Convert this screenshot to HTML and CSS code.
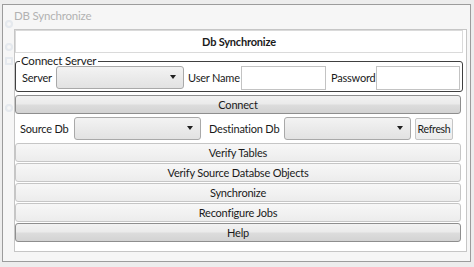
FILE: index.html
```html
<!DOCTYPE html>
<html>
<head>
<meta charset="utf-8">
<link rel="stylesheet" href="styles.css">
</head>
<body>
<div class="frame">
  <span class="ghost g1"></span>
  <span class="ghost g2"></span>
  <span class="ghost g3"></span>
  <span class="ghost g4"></span>
  <div class="title">DB Synchronize</div>
  <div class="panel">
    <div class="header">Db Synchronize</div>
    <div class="group">
      <span class="legend">Connect Server</span>
      <div class="row">
        <span class="lbl l-server">Server</span>
        <div class="combo c-server"><span class="arrow"></span></div>
        <span class="lbl l-user">User Name</span>
        <div class="textbox t-user"></div>
        <span class="lbl l-pass">Password</span>
        <div class="textbox t-pass"></div>
      </div>
    </div>
    <div class="btn strong b-connect">Connect</div>
    <div class="row dbrow">
      <span class="lbl l-src">Source Db</span>
      <div class="combo c-db"><span class="arrow"></span></div>
      <span class="lbl l-dst">Destination Db</span>
      <div class="combo c-db"><span class="arrow"></span></div>
      <div class="refresh">Refresh</div>
    </div>
    <div class="btn b-first">Verify Tables</div>
    <div class="btn">Verify Source Databse Objects</div>
    <div class="btn">Synchronize</div>
    <div class="btn">Reconfigure Jobs</div>
    <div class="btn strong">Help</div>
  </div>
</div>
</body>
</html>
```
FILE: styles.css
```css
* { box-sizing: border-box; }
html, body { margin: 0; padding: 0; }
body {
  background: #ededed;
  font-family: Lato, "Noto Sans", sans-serif;
  font-size: 11px;
  letter-spacing: -0.2px;
  color: #1a1a1a;
  width: 474px;
  height: 267px;
  overflow: hidden;
  padding-top: 4px;
  padding-left: 2px;
}
.frame {
  position: relative;
  width: 469px;
  height: 258px;
  border: 1px solid #9c9c9c;
  background: #f6f6f6;
}
.ghost {
  position: absolute;
  left: 2px;
  width: 8px;
  height: 8px;
  border: 2px solid #d4dbe6;
  border-radius: 50%;
  opacity: 0.5;
}
.g1 { top: 15px; }
.g2 { top: 38px; }
.g3 { top: 52px; border-radius: 1px; }
.g4 { top: 99px; }
.title {
  height: 24px;
  padding-left: 11px;
  line-height: 22px;
  color: #b2b2b2;
  font-size: 11.5px;
}
.panel {
  margin-left: 11px;
  width: 453px;
  height: 223px;
  border: 1px solid #c6c6c6;
  background: #fff;
  display: flex;
  flex-direction: column;
  align-items: flex-start;
}
.header {
  width: 448px;
  height: 23px;
  border: 1px solid #dadada;
  display: flex;
  align-items: center;
  justify-content: center;
  font-weight: bold;
}
.group {
  position: relative;
  margin-top: 8px;
  width: 448px;
  height: 31px;
  border: 1px solid #404040;
  border-radius: 3px;
  padding: 4px 2px 2px 6px;
}
.legend {
  position: absolute;
  top: -9px;
  left: 4px;
  padding: 0 2px 0 1px;
  background: #fff;
  font-size: 11.5px;
  line-height: 16px;
}
.row {
  display: flex;
  align-items: center;
  height: 23px;
}
.row > * { flex: none; }
.lbl { white-space: nowrap; }
.l-server { width: 34px; }
.l-user { width: 57px; padding-left: 4px; }
.l-pass { width: 50px; padding-left: 5px; }
.combo {
  position: relative;
  height: 23px;
  border: 1px solid #a9a9a9;
  border-radius: 3px;
  background: linear-gradient(#f3f3f3, #e2e2e2);
}
.c-server { width: 128px; }
.arrow {
  position: absolute;
  right: 7px;
  top: 8px;
  width: 0;
  height: 0;
  border-left: 3.5px solid transparent;
  border-right: 3.5px solid transparent;
  border-top: 4px solid #202020;
}
.textbox {
  height: 24px;
  border: 1px solid #c3c3c3;
  background: #fff;
}
.t-user { width: 85px; }
.t-pass { width: 84px; }
.btn {
  width: 446px;
  height: 19px;
  margin-top: 1px;
  border: 1px solid #c6c6c6;
  border-radius: 3px;
  background: linear-gradient(#f7f7f7, #ececec);
  display: flex;
  align-items: center;
  justify-content: center;
  line-height: 1;
}
.btn.strong {
  border-color: #8e8e8e;
  background: linear-gradient(#f2f2f2 0%, #ebebeb 45%, #dcdcdc 55%, #d3d3d3 100%);
}
.b-connect { margin-top: 3px; }
.b-first { margin-top: 3px; }
.dbrow {
  margin-top: 3px;
  padding-left: 5px;
}
.l-src { width: 54px; }
.l-dst { width: 83px; padding-left: 8px; }
.c-db { width: 127px; }
.refresh {
  margin-left: 4px;
  width: 38px;
  height: 22px;
  border: 1px solid #c6c6c6;
  border-radius: 2px;
  background: linear-gradient(#f8f8f8, #ececec);
  display: flex;
  align-items: center;
  justify-content: center;
  font-size: 10.5px;
  letter-spacing: -0.3px;
}
```
